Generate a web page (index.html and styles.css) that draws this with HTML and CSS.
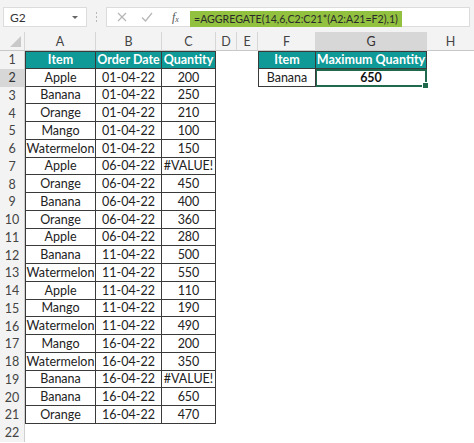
FILE: index.html
```html
<!DOCTYPE html>
<html>
<head>
<meta charset="utf-8">
<link rel="stylesheet" href="styles.css">
</head>
<body>
<div class="toolbar">
  <div class="namebox"><span class="nb-text">G2</span><span class="nb-arrow"></span></div>
  <div class="dots"><i></i><i></i><i></i></div>
  <div class="fbar">
    <div class="ficons">
      <svg class="ic-x" width="10" height="10" viewBox="0 0 10 10"><path d="M1 1 L9 9 M9 1 L1 9" stroke="#b5b5b5" stroke-width="1.2" fill="none"/></svg>
      <svg class="ic-ok" width="12" height="10" viewBox="0 0 12 10"><path d="M1 5.5 L4.5 9 L11 1" stroke="#b5b5b5" stroke-width="1.2" fill="none"/></svg>
      <span class="fx">f<sub>x</sub></span>
    </div>
    <div class="formula">=AGGREGATE(14,6,C2:C21*(A2:A21=F2),1)</div>
  </div>
</div>
<div class="sheet">
  <div class="ch corner"><span class="tri"></span></div>
  <div class="ch">A</div><div class="ch">B</div><div class="ch">C</div><div class="ch">D</div><div class="ch">E</div><div class="ch">F</div><div class="ch sel">G</div><div class="ch last">H</div>

  <div class="rh">1</div>
  <div class="c t hd first top">Item</div><div class="c t hd top">Order Date</div><div class="c t hd top">Quantity</div>
  <div class="c"></div><div class="c"></div>
  <div class="c t hd first top">Item</div><div class="c t hd top">Maximum Quantity</div><div class="c"></div>

  <div class="rh sel">2</div>
  <div class="c t first">Apple</div><div class="c t">01-04-22</div><div class="c t">200</div>
  <div class="c"></div><div class="c"></div>
  <div class="c t first">Banana</div><div class="c t active"><b>650</b><span class="handle"></span></div><div class="c"></div>

  <div class="rh">3</div><div class="c t first">Banana</div><div class="c t">01-04-22</div><div class="c t">250</div><div class="c rest"></div>
  <div class="rh">4</div><div class="c t first">Orange</div><div class="c t">01-04-22</div><div class="c t">210</div><div class="c rest"></div>
  <div class="rh">5</div><div class="c t first">Mango</div><div class="c t">01-04-22</div><div class="c t">100</div><div class="c rest"></div>
  <div class="rh">6</div><div class="c t first">Watermelon</div><div class="c t">01-04-22</div><div class="c t">150</div><div class="c rest"></div>
  <div class="rh">7</div><div class="c t first">Apple</div><div class="c t">06-04-22</div><div class="c t">#VALUE!</div><div class="c rest"></div>
  <div class="rh">8</div><div class="c t first">Orange</div><div class="c t">06-04-22</div><div class="c t">450</div><div class="c rest"></div>
  <div class="rh">9</div><div class="c t first">Banana</div><div class="c t">06-04-22</div><div class="c t">400</div><div class="c rest"></div>
  <div class="rh">10</div><div class="c t first">Orange</div><div class="c t">06-04-22</div><div class="c t">360</div><div class="c rest"></div>
  <div class="rh">11</div><div class="c t first">Apple</div><div class="c t">06-04-22</div><div class="c t">280</div><div class="c rest"></div>
  <div class="rh">12</div><div class="c t first">Banana</div><div class="c t">11-04-22</div><div class="c t">500</div><div class="c rest"></div>
  <div class="rh">13</div><div class="c t first">Watermelon</div><div class="c t">11-04-22</div><div class="c t">550</div><div class="c rest"></div>
  <div class="rh">14</div><div class="c t first">Apple</div><div class="c t">11-04-22</div><div class="c t">110</div><div class="c rest"></div>
  <div class="rh">15</div><div class="c t first">Mango</div><div class="c t">11-04-22</div><div class="c t">190</div><div class="c rest"></div>
  <div class="rh">16</div><div class="c t first">Watermelon</div><div class="c t">11-04-22</div><div class="c t">490</div><div class="c rest"></div>
  <div class="rh">17</div><div class="c t first">Mango</div><div class="c t">16-04-22</div><div class="c t">200</div><div class="c rest"></div>
  <div class="rh">18</div><div class="c t first">Watermelon</div><div class="c t">16-04-22</div><div class="c t">350</div><div class="c rest"></div>
  <div class="rh">19</div><div class="c t first">Banana</div><div class="c t">16-04-22</div><div class="c t">#VALUE!</div><div class="c rest"></div>
  <div class="rh">20</div><div class="c t first">Banana</div><div class="c t">16-04-22</div><div class="c t">650</div><div class="c rest"></div>
  <div class="rh">21</div><div class="c t first">Orange</div><div class="c t">16-04-22</div><div class="c t">470</div><div class="c rest"></div>
  <div class="rh">22</div><div class="c all"></div>
</div>
</body>
</html>
```
FILE: styles.css
```css
html, body {
  margin: 0;
  padding: 0;
  background: #ffffff;
}
body {
  width: 474px;
  height: 443px;
  overflow: hidden;
  font-family: "Lato", "Open Sans", sans-serif;
  color: #222;
}
.toolbar {
  height: 32px;
  background: #f3f3f3;
  display: flex;
  align-items: flex-start;
  padding-top: 7px;
  box-sizing: border-box;
  padding-left: 3px;
}
.namebox {
  width: 84px;
  height: 20px;
  background: #fff;
  border: 1px solid #dcdcdc;
  box-sizing: border-box;
  display: flex;
  align-items: center;
  justify-content: space-between;
  padding: 0 8px 0 6px;
  font-size: 12px;
  color: #333;
}
.nb-arrow {
  width: 0;
  height: 0;
  border-left: 3px solid transparent;
  border-right: 3px solid transparent;
  border-top: 3px solid #666;
}
.dots {
  width: 19px;
  height: 20px;
  display: flex;
  flex-direction: column;
  align-items: center;
  justify-content: center;
  gap: 2px;
}
.dots i {
  display: block;
  width: 1px;
  height: 2px;
  background: #b8b8b8;
}
.fbar {
  flex: 1;
  height: 20px;
  margin-right: 4px;
  background: #fff;
  border: 1px solid #dcdcdc;
  box-sizing: border-box;
  display: flex;
  align-items: flex-start;
}
.ficons {
  width: 86px;
  display: flex;
  align-items: center;
  padding-left: 10px;
  box-sizing: border-box;
  height: 100%;
}
.ic-x { margin-right: 14px; }
.ic-ok { margin-right: 19px; }
.fx {
  font-family: "Liberation Serif", serif;
  font-style: italic;
  font-size: 12px;
  color: #555;
}
.fx sub {
  font-size: 8px;
  vertical-align: -1px;
}
.formula {
  background: #92c13f;
  height: 16px;
  width: 212px;
  margin-top: 3px;
  margin-left: -3px;
  font-size: 10.6px;
  line-height: 16px;
  padding-left: 4px;
  box-sizing: border-box;
  color: #2a2a2a;
  white-space: nowrap;
}
.sheet {
  display: grid;
  grid-template-columns: 25px 71px 66px 54px 21px 21px 58px 111px 1fr;
  grid-template-rows: 19px repeat(22, 17.75px);
  font-size: 12.5px;
}
.ch {
  background: #f3f3f3;
  border-right: 1px solid #d6d6d6;
  border-bottom: 1px solid #c8c8c8;
  box-sizing: border-box;
  display: flex;
  align-items: center;
  justify-content: center;
  color: #444;
  font-size: 12.5px;
}
.ch.sel {
  background: #d7d7d7;
  color: #333;
}
.ch.last { border-right: none; }
.corner { position: relative; }
.tri {
  position: absolute;
  right: 3px;
  bottom: 3px;
  width: 0;
  height: 0;
  border-left: 11px solid transparent;
  border-bottom: 11px solid #c9c9c9;
}
.rh {
  background: #f3f3f3;
  border-right: 1px solid #cfcfcf;
  box-sizing: border-box;
  display: flex;
  align-items: center;
  justify-content: center;
  color: #444;
  font-size: 12.5px;
}
.rh.sel { background: #d7d7d7; color: #333; }
.c {
  box-sizing: border-box;
  display: flex;
  align-items: center;
  justify-content: center;
  white-space: nowrap;
  overflow: visible;
}
.c.t {
  border-right: 1px solid #3a3a3a;
  border-bottom: 1px solid #3a3a3a;
}
.c.first { border-left: 1px solid #3a3a3a; }
.c.top { border-top: 1px solid #3a3a3a; }
.c.hd {
  background: #0f9a98;
  color: #fff;
  font-weight: 700;
}
.c.rest { grid-column: span 5; }
.c.all { grid-column: span 8; }
.c.active {
  position: relative;
  border: 2px solid #1f6a4c;
  border-left-width: 1px;
}
.c.active b { font-weight: 700; color: #111; }
.handle {
  position: absolute;
  right: -4px;
  bottom: -4px;
  width: 5px;
  height: 5px;
  background: #1f6a4c;
  border: 1px solid #fff;
}
```
